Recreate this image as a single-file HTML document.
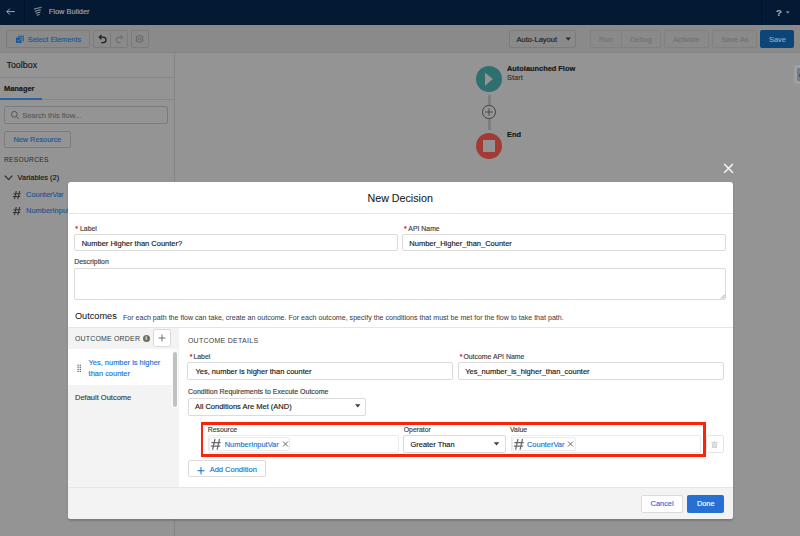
<!DOCTYPE html>
<html><head><meta charset="utf-8">
<style>
*{box-sizing:border-box;margin:0;padding:0}
html,body{width:800px;height:536px;overflow:hidden;background:#949494;font-family:"Liberation Sans",sans-serif;color:#181818}
.a{position:absolute}
.t{position:absolute;line-height:1;white-space:nowrap;-webkit-text-stroke-width:0.15px}
.box{position:absolute;border:1px solid #dddbda;border-radius:2px;background:#fff}
.dbox{position:absolute;border:1px solid #7c7c7c;border-radius:2px}
.blue{color:#1b74d6}
.lbl{font-size:6.9px;color:#3e3e3c}
.req{color:#ea001e}
</style></head><body>

<!-- HEADER -->
<div class="a" style="left:0;top:0;width:800px;height:25px;background:#031934"></div>
<div class="a" style="left:24px;top:0;width:1px;height:25px;background:#021229"></div>
<div class="a" style="left:761px;top:0;width:1px;height:25px;background:#021229"></div>
<svg class="a" style="left:0;top:0" width="800" height="25">
  <path d="M6.8 11.6 H14.8 M6.8 11.6 L9.8 8.6 M6.8 11.6 L9.8 14.6" stroke="#9ea5b0" stroke-width="1" fill="none"/>
  <path d="M34 9.2 Q37 8.2 38.5 8 Q40.5 7.8 41.6 7.2 M34.8 11.4 Q37.5 10.2 40.8 9.9 M35.8 13.4 Q38 12.4 40.3 12.3 M36.8 15.3 Q38.3 14.5 39.6 14.6" stroke="#9ea5b0" stroke-width="1" fill="none"/>
  <path d="M786 11.5 L789.5 11.5 L787.75 13.5 Z" fill="#a6adb8"/>
</svg>
<div class="t" style="left:48.8px;top:7.9px;font-size:7.4px;color:#a0a7b2">Flow Builder</div>
<div class="t" style="left:776px;top:7.6px;font-size:9.6px;font-weight:bold;color:#a9b0ba">?</div>

<!-- TOOLBAR -->
<div class="a" style="left:0;top:25px;width:800px;height:28px;background:#8a8a8a;border-bottom:1px solid #828282"></div>
<div class="dbox" style="left:6px;top:30px;width:84.4px;height:17.7px"></div>
<svg class="a" style="left:15px;top:35px" width="10" height="10">
  <rect x="1" y="2.5" width="5.5" height="5.5" fill="#1d5697"/>
  <path d="M3 1.2 H8.3 V6.5" stroke="#1d5697" stroke-width="1.1" fill="none"/>
  <path d="M2.2 5.2 L3.5 6.5 L5.6 4" stroke="#8a8a8a" stroke-width="0.8" fill="none"/>
</svg>
<div class="t" style="left:27.8px;top:35.9px;font-size:7.4px;color:#1d5697">Select Elements</div>
<div class="dbox" style="left:93px;top:30px;width:35px;height:17.7px"></div>
<div class="a" style="left:110px;top:30px;width:1px;height:17.7px;background:#7c7c7c"></div>
<div class="dbox" style="left:130.5px;top:30px;width:18px;height:17.7px"></div>
<svg class="a" style="left:93px;top:30px" width="60" height="18">
  <path d="M8.5 5 L6.3 7.2 L8.5 9.4 M6.6 7.2 H10 Q13 7.2 13 9.9 Q13 12.6 10 12.6 H8.3" stroke="#1e1e1e" stroke-width="1.2" fill="none"/>
  <path d="M27.5 5 L29.7 7.2 L27.5 9.4 M29.4 7.2 H26 Q23 7.2 23 9.9 Q23 12.6 26 12.6 H27.7" stroke="#6a6a6a" stroke-width="1" fill="none"/>
  <polygon points="46.50,4.90 45.05,6.39 43.04,6.90 43.60,8.90 43.04,10.90 45.05,11.41 46.50,12.90 47.95,11.41 49.96,10.90 49.40,8.90 49.96,6.90 47.95,6.39" stroke="#5e5e5e" stroke-width="0.9" fill="none" stroke-linejoin="round"/>
  <circle cx="46.5" cy="8.9" r="1.1" stroke="#5e5e5e" stroke-width="0.7" fill="none"/>
</svg>

<div class="dbox" style="left:509px;top:30px;width:67px;height:17.7px"></div>
<div class="t" style="left:516.6px;top:36px;font-size:7.5px;color:#1e1e1e">Auto-Layout</div>
<svg class="a" style="left:560px;top:34px" width="14" height="10"><path d="M5.5 3.5 H11 L8.25 6.5 Z" fill="#2a2a2a"/></svg>
<div class="dbox" style="left:589.5px;top:30px;width:71.5px;height:17.7px;border-color:#818181"></div>
<div class="a" style="left:620.5px;top:30px;width:1px;height:17.7px;background:#818181"></div>
<div class="t" style="left:599px;top:36px;font-size:7.4px;color:#727272">Run</div>
<div class="t" style="left:630px;top:36px;font-size:7.4px;color:#727272">Debug</div>
<div class="dbox" style="left:664px;top:30px;width:45px;height:17.7px;border-color:#818181"></div>
<div class="t" style="left:673px;top:36px;font-size:7.4px;color:#727272">Activate</div>
<div class="dbox" style="left:712px;top:30px;width:45px;height:17.7px;border-color:#818181"></div>
<div class="t" style="left:721.4px;top:36px;font-size:7.4px;color:#727272">Save As</div>
<div class="a" style="left:760px;top:30px;width:34px;height:17.7px;background:#0e4579;border-radius:2px"></div>
<div class="t" style="left:769px;top:36px;font-size:7.4px;color:#9aa6b6">Save</div>

<!-- TOOLBOX PANEL -->
<div class="a" style="left:174px;top:53px;width:1px;height:483px;background:#858585"></div>
<div class="t" style="left:6.5px;top:60.5px;font-size:8.9px;color:#141414">Toolbox</div>
<div class="a" style="left:0;top:77px;width:174px;height:1px;background:#878787"></div>
<div class="t" style="left:4px;top:85px;font-size:7.4px;font-weight:bold;color:#141414">Manager</div>
<div class="a" style="left:0;top:99px;width:174px;height:1px;background:#878787"></div>
<div class="a" style="left:0;top:98px;width:42px;height:2px;background:#2c62a3"></div>
<div class="dbox" style="left:4.4px;top:106.3px;width:163.5px;height:17.3px"></div>
<svg class="a" style="left:10px;top:110px" width="10" height="10"><circle cx="4.3" cy="4.3" r="2.9" stroke="#505050" stroke-width="0.9" fill="none"/><path d="M6.4 6.4 L8.6 8.6" stroke="#505050" stroke-width="1"/></svg>
<div class="t" style="left:22.2px;top:111.5px;font-size:7.5px;color:#545454;-webkit-text-stroke-width:0.08px">Search this flow...</div>
<div class="dbox" style="left:4.4px;top:131.3px;width:66.3px;height:17px"></div>
<div class="t" style="left:13.5px;top:136.1px;font-size:7.3px;color:#1d5697">New Resource</div>
<div class="t" style="left:3.9px;top:156.5px;font-size:6.6px;letter-spacing:0.34px;color:#2e2e2e;-webkit-text-stroke-width:0.05px">RESOURCES</div>
<svg class="a" style="left:3px;top:173px" width="12" height="10"><path d="M1.8 2.6 L5.6 6.6 L9.4 2.6" stroke="#222" stroke-width="1.05" fill="none"/></svg>
<div class="t" style="left:17.6px;top:174.4px;font-size:7.45px;color:#141414">Variables (2)</div>
<svg class="a" style="left:11.6px;top:190px" width="10" height="11"><path d="M4.3 1 L2.4 9.2 M7.7 1 L5.8 9.2 M1.4 3.7 H8.6 M1 6.5 H8.2" stroke="#333" stroke-width="1.05" fill="none"/></svg>
<div class="t" style="left:26.1px;top:190.7px;font-size:7.45px;color:#1d5697">CounterVar</div>
<svg class="a" style="left:11.6px;top:206px" width="10" height="11"><path d="M4.3 1 L2.4 9.2 M7.7 1 L5.8 9.2 M1.4 3.7 H8.6 M1 6.5 H8.2" stroke="#333" stroke-width="1.05" fill="none"/></svg>
<div class="t" style="left:26.1px;top:206.7px;font-size:7.45px;color:#1d5697">NumberInputVar</div>

<!-- CANVAS -->
<div class="a" style="left:794.3px;top:65.4px;width:10px;height:18.3px;background:#a0a0a0;border-radius:3px"></div><div class="a" style="left:796.9px;top:68px;width:6px;height:13.1px;background:#6c8090;border-radius:1px"></div><div class="a" style="left:798.6px;top:73.5px;width:1.4px;height:3px;background:#4a5560"></div>
<div class="a" style="left:487.5px;top:95px;width:3px;height:35px;background:#7e7e7e"></div>
<div class="a" style="left:476px;top:66.2px;width:26.2px;height:26.2px;border-radius:50%;background:#2f6f6e"></div>
<svg class="a" style="left:476px;top:66px" width="27" height="27"><path d="M9 6.8 L16.9 13.1 L9 19.8 Z" fill="#949494"/></svg>
<div class="a" style="left:482.1px;top:105.4px;width:13.6px;height:13.6px;border-radius:50%;background:#949494;border:1px solid #444"></div>
<svg class="a" style="left:482px;top:105px" width="14" height="14"><path d="M7 3.2 V10.8 M3.2 7 H10.8" stroke="#444" stroke-width="0.9"/></svg>
<div class="a" style="left:476px;top:132.5px;width:26.2px;height:26.2px;border-radius:50%;background:#a23b33"></div>
<div class="a" style="left:482.8px;top:139.5px;width:12.4px;height:12.4px;background:#939393"></div>
<div class="t" style="left:507px;top:64.5px;font-size:7.4px;font-weight:bold;color:#141414">Autolaunched Flow</div>
<div class="t" style="left:507px;top:74px;font-size:7.45px;color:#262626;-webkit-text-stroke-width:0.05px">Start</div>
<div class="t" style="left:507px;top:131px;font-size:7.4px;font-weight:bold;color:#141414">End</div>

<!-- CLOSE X -->
<svg class="a" style="left:720px;top:160px" width="18" height="18"><path d="M4.2 3.9 L12.9 12.8 M12.9 3.9 L4.2 12.8" stroke="#f6f6f6" stroke-width="1.5"/></svg>

<!-- MODAL -->
<div id="modal" class="a" style="left:67.5px;top:181.5px;width:665px;height:337.5px;background:#fff;border-radius:3px;overflow:hidden;box-shadow:0 1.5px 2px rgba(0,0,0,0.18)">
</div>
<div class="a" style="left:67.5px;top:213px;width:665px;height:1px;background:#e5e5e5"></div>
<div class="t" style="left:367.5px;top:193.2px;font-size:10.7px;color:#181818;-webkit-text-stroke-width:0.08px">New Decision</div>

<div class="t lbl" style="left:75.3px;top:225.8px"><span class="req">*</span></div>
<div class="t lbl" style="left:80px;top:225.6px">Label</div>
<div class="box" style="left:74.3px;top:234.3px;width:323.5px;height:17px"></div>
<div class="t" style="left:81.7px;top:240px;font-size:7.5px">Number Higher than Counter?</div>
<div class="t lbl" style="left:404px;top:225.8px"><span class="req">*</span></div>
<div class="t lbl" style="left:408.3px;top:225.6px">API Name</div>
<div class="box" style="left:402.1px;top:234.3px;width:324px;height:17px"></div>
<div class="t" style="left:409.3px;top:240px;font-size:7.5px">Number_Higher_than_Counter</div>

<div class="t lbl" style="left:74.3px;top:259.3px">Description</div>
<div class="box" style="left:74.3px;top:268.3px;width:651.8px;height:31.7px"></div>
<svg class="a" style="left:719px;top:293px" width="8" height="8"><path d="M2 5.6 L6 1.6 M4.1 5.6 L6 3.7" stroke="#7a7a7a" stroke-width="0.7"/></svg>

<div class="t" style="left:74.9px;top:311.9px;font-size:9.2px;color:#181818;-webkit-text-stroke-width:0.05px">Outcomes</div>
<div class="t" style="left:122.9px;top:314.6px;font-size:7.1px;color:#444;-webkit-text-stroke-width:0.05px">For each path the flow can take, create an outcome. For each outcome, specify the conditions that must be met for the flow to take that path.</div>
<div class="a" style="left:67.5px;top:326.5px;width:665px;height:1px;background:#e5e5e5"></div>

<!-- outcome left panel -->
<div class="a" style="left:67.5px;top:327.5px;width:111.5px;height:159.5px;background:#f3f3f3"></div>
<div class="t" style="left:74.9px;top:335.2px;font-size:7px;letter-spacing:0.17px;color:#3e3e3c;-webkit-text-stroke-width:0">OUTCOME ORDER</div>
<div class="a" style="left:143.1px;top:335.2px;width:7px;height:7px;border-radius:50%;background:#706e6b"></div>
<div class="t" style="left:145.6px;top:336.1px;font-size:5px;font-weight:bold;color:#f3f3f3">i</div>
<div class="box" style="left:153px;top:329px;width:18px;height:18px"></div>
<svg class="a" style="left:153px;top:329px" width="18" height="18"><path d="M9 5.6 V12.4 M5.6 9 H12.4" stroke="#606060" stroke-width="0.9"/></svg>
<div class="a" style="left:67.5px;top:349.4px;width:104px;height:35.8px;background:#fff"></div>
<svg class="a" style="left:76px;top:363px" width="8" height="11"><g fill="#5a5a5a"><rect x="1.5" y="1.6999999999999997" width="1.2" height="1.2"/><rect x="1.5" y="3.6999999999999997" width="1.2" height="1.2"/><rect x="1.5" y="5.800000000000001" width="1.2" height="1.2"/><rect x="1.5" y="7.800000000000001" width="1.2" height="1.2"/><rect x="3.6999999999999997" y="1.6999999999999997" width="1.2" height="1.2"/><rect x="3.6999999999999997" y="3.6999999999999997" width="1.2" height="1.2"/><rect x="3.6999999999999997" y="5.800000000000001" width="1.2" height="1.2"/><rect x="3.6999999999999997" y="7.800000000000001" width="1.2" height="1.2"/></g></svg>
<div class="t blue" style="left:88.6px;top:359.2px;font-size:7.45px">Yes, number is higher</div>
<div class="t blue" style="left:88.6px;top:370.1px;font-size:7.45px">than counter</div>
<div class="t" style="left:75px;top:393.8px;font-size:7.5px;color:#3e3e3c">Default Outcome</div>
<div class="a" style="left:171.5px;top:349.4px;width:6px;height:59px;background:#fafafa"></div>
<div class="a" style="left:173px;top:352px;width:3.8px;height:54.6px;border-radius:2px;background:#c1c1c1"></div>

<!-- outcome details -->
<div class="t" style="left:187.9px;top:337px;font-size:7px;letter-spacing:0.27px;color:#3e3e3c;-webkit-text-stroke-width:0">OUTCOME DETAILS</div>
<div class="t lbl" style="left:189.7px;top:354.2px"><span class="req">*</span></div>
<div class="t lbl" style="left:193.4px;top:353.9px">Label</div>
<div class="box" style="left:187.4px;top:362.4px;width:265.7px;height:18px"></div>
<div class="t" style="left:195.4px;top:368.4px;font-size:7.5px">Yes, number is higher than counter</div>
<div class="t lbl" style="left:459.8px;top:354.2px"><span class="req">*</span></div>
<div class="t lbl" style="left:463.4px;top:353.9px">Outcome API Name</div>
<div class="box" style="left:458px;top:362.4px;width:265.6px;height:18px"></div>
<div class="t" style="left:465.2px;top:368.4px;font-size:7.5px">Yes_number_is_higher_than_counter</div>

<div class="t lbl" style="left:188px;top:387.9px;font-size:7px">Condition Requirements to Execute Outcome</div>
<div class="box" style="left:187.5px;top:398px;width:178.8px;height:17.8px"></div>
<div class="t" style="left:195px;top:403.2px;font-size:7.5px">All Conditions Are Met (AND)</div>
<svg class="a" style="left:350px;top:400px" width="14" height="12"><path d="M5 4.3 H10.5 L7.75 7.5 Z" fill="#3e3e3c"/></svg>

<div class="a" style="left:200.5px;top:422px;width:505.5px;height:34.8px;background:#fa2508"></div><div class="a" style="left:203.4px;top:425.1px;width:499.6px;height:28.7px;background:#fff"></div>
<div class="t lbl" style="left:207.7px;top:427px">Resource</div>
<div class="box" style="left:207.5px;top:435.2px;width:191.3px;height:17.9px;border-color:#ebebeb"></div>
<div class="box" style="left:209.3px;top:437.2px;width:81.2px;height:14.2px;border-color:#ececec"></div>
<svg class="a" style="left:210px;top:438px" width="12" height="13"><path d="M5 1 L2.6 11.7 M9.5 1 L7.1 11.7 M1.4 4.5 H10.7 M0.9 8 H10.2" stroke="#6a6a6a" stroke-width="1.25" fill="none"/></svg>
<div class="t blue" style="left:224.7px;top:440.7px;font-size:7.45px">NumberInputVar</div>
<svg class="a" style="left:281px;top:439px" width="9" height="10"><path d="M2 2.5 L7 7.5 M7 2.5 L2 7.5" stroke="#555" stroke-width="0.9"/></svg>

<div class="t lbl" style="left:403.7px;top:427px">Operator</div>
<div class="box" style="left:403.3px;top:435.2px;width:102.7px;height:17.9px"></div>
<div class="t" style="left:410.5px;top:441px;font-size:7.45px">Greater Than</div>
<svg class="a" style="left:490px;top:438px" width="14" height="12"><path d="M3.75 4.3 H9.25 L6.5 7.5 Z" fill="#3e3e3c"/></svg>

<div class="t lbl" style="left:510px;top:427px">Value</div>
<div class="box" style="left:510.5px;top:435.2px;width:190.5px;height:17.9px;border-color:#ebebeb"></div>
<div class="box" style="left:511.5px;top:437.2px;width:64.4px;height:14.2px;border-color:#ececec"></div>
<svg class="a" style="left:512.5px;top:438px" width="12" height="13"><path d="M5 1 L2.6 11.7 M9.5 1 L7.1 11.7 M1.4 4.5 H10.7 M0.9 8 H10.2" stroke="#6a6a6a" stroke-width="1.25" fill="none"/></svg>
<div class="t blue" style="left:527px;top:440.7px;font-size:7.45px">CounterVar</div>
<svg class="a" style="left:566px;top:439px" width="9" height="10"><path d="M2 2.5 L7 7.5 M7 2.5 L2 7.5" stroke="#555" stroke-width="0.9"/></svg>

<div class="box" style="left:706px;top:435px;width:18px;height:18px;border-color:#e3e3e3;border-radius:2.5px"></div>
<svg class="a" style="left:710px;top:439px" width="10" height="10"><path d="M1.3 3.6 H7.7" stroke="#c4c4c4" stroke-width="0.9"/><path d="M3.3 3.3 L4.5 2.2 L5.7 3.3 Z" fill="#c4c4c4"/><rect x="2.2" y="4.6" width="4.6" height="4.2" fill="#c8c8c8"/><rect x="3" y="5.5" width="3" height="2.3" fill="#e2e2e2"/></svg>

<div class="box" style="left:187.8px;top:460px;width:78.7px;height:17.4px"></div>
<svg class="a" style="left:196px;top:465.6px" width="10" height="10"><path d="M5 1.2 V8.3 M1.5 4.75 H8.5" stroke="#0b6ed0" stroke-width="1"/></svg>
<div class="t blue" style="left:209.7px;top:465.6px;font-size:7.5px">Add Condition</div>

<!-- footer -->
<div class="a" style="left:67.5px;top:486.5px;width:665px;height:32.5px;background:#f3f3f3;border-top:1px solid #e5e5e5;border-radius:0 0 3px 3px"></div>
<div class="box" style="left:641.3px;top:495px;width:41.4px;height:17.6px"></div>
<div class="t blue" style="left:650.6px;top:500.2px;font-size:7.4px">Cancel</div>
<div class="a" style="left:687.4px;top:495px;width:36.6px;height:17.6px;background:#2670d3;border-radius:2px"></div>
<div class="t" style="left:697px;top:500.2px;font-size:7.3px;color:#fff">Done</div>


</body></html>
